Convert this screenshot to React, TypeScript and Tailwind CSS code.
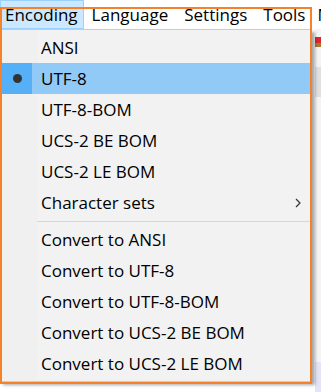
const items: { label: string; checked?: boolean; submenu?: boolean; sepAfter?: boolean }[] = [
  { label: "ANSI" },
  { label: "UTF-8", checked: true },
  { label: "UTF-8-BOM" },
  { label: "UCS-2 BE BOM" },
  { label: "UCS-2 LE BOM" },
  { label: "Character sets", submenu: true, sepAfter: true },
  { label: "Convert to ANSI" },
  { label: "Convert to UTF-8" },
  { label: "Convert to UTF-8-BOM" },
  { label: "Convert to UCS-2 BE BOM" },
  { label: "Convert to UCS-2 LE BOM" },
];

const font = { fontFamily: '"Open Sans", "Noto Sans", sans-serif' };

export default function App() {
  return (
    <div className="relative h-[392px] w-[321px] overflow-hidden bg-white text-[17px] leading-none text-black" style={font}>
      {/* menu bar */}
      <div className="flex h-[29px] items-stretch bg-white">
        <div className="flex items-center border border-[#99d1ff] bg-[#cce8ff] pl-[4px] pr-[5px]">Encoding</div>
        <div className="flex items-center pl-[8px] pr-[8px]">Language</div>
        <div className="flex items-center px-[8px]">Settings</div>
        <div className="flex items-center px-[8px]">Tools</div>
        <div className="flex items-center px-[4px]">M</div>
      </div>

      {/* background app strip at right */}
      <div className="absolute right-0 top-[29px] flex h-[363px] w-[6px] flex-col bg-[#f4f4f4]">
        <div className="mt-[8px] h-[6px] w-full bg-[#d9262f]" />
        <div className="h-[4px] w-full bg-[#a8782f]" />
        <div className="mt-[20px] h-[30px] w-full bg-[#e0e0e0]" />
        <div className="mt-auto h-[30px] w-full bg-[#e4e4f8]" />
      </div>

      {/* dropdown */}
      <div className="absolute left-0 top-[29px] w-[312px] border border-[#cccccc] bg-[#f2f2f2] py-[2px] shadow-[3px_3px_3px_rgba(0,0,0,0.35)]">
        <div className="absolute bottom-0 left-0 top-0 w-[36px] bg-[#f0f0f0]" />
        {items.map((it) => (
          <div key={it.label}>
            <div className={`relative flex h-[31px] items-center ${it.checked ? "bg-[#91c9f7]" : ""}`}>
              <div className={`flex h-full w-[31px] items-center justify-center ${it.checked ? "bg-[#56b0f7]" : ""}`}>
                {it.checked && <div className="ml-[2px] h-[9px] w-[9px] rounded-full bg-[#333333]" />}
              </div>
              <span className="pb-[1px] pl-[9px]">{it.label}</span>
              {it.submenu && (
                <svg className="absolute right-[10px] top-[11px]" width="6" height="10" viewBox="0 0 6 10">
                  <path d="M1 1 L5 5 L1 9" fill="none" stroke="#333" strokeWidth="1.2" />
                </svg>
              )}
            </div>
            {it.sepAfter && (
              <div className="relative flex h-[6px] items-center pl-[36px]">
                <div className="h-px w-full bg-[#d7d7d7]" />
              </div>
            )}
          </div>
        ))}
      </div>

      {/* orange annotation outline */}
      <div className="pointer-events-none absolute left-0 top-[7px] h-[377px] w-[312px] border-2 border-[#f5822a]" />
    </div>
  );
}
